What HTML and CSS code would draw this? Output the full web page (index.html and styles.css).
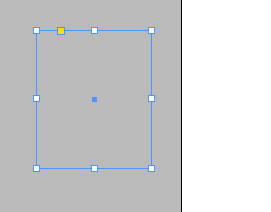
FILE: index.html
```html
<!DOCTYPE html>
<html lang="en">
<head>
    <meta charset="UTF-8">
    <title>Canvas</title>
    <link rel="stylesheet" href="styles.css">
</head>
<body>
    <div class="workspace">
        <div class="canvas">
            <div class="selection">
                <span class="handle h-tl"></span>
                <span class="handle h-tm"></span>
                <span class="handle h-tr"></span>
                <span class="handle h-ml"></span>
                <span class="handle h-mr"></span>
                <span class="handle h-bl"></span>
                <span class="handle h-bm"></span>
                <span class="handle h-br"></span>
                <span class="rotate"></span>
                <span class="pivot"></span>
            </div>
        </div>
        <div class="panel"></div>
    </div>
</body>
</html>
```

FILE: styles.css
```css
* {
    margin: 0;
    padding: 0;
    box-sizing: border-box;
}

body {
    width: 271px;
    height: 212px;
    overflow: hidden;
}

.workspace {
    display: flex;
    height: 212px;
}

.canvas {
    position: relative;
    width: 182px;
    background: #bababa;
    border-right: 1px solid #000000;
}

.panel {
    flex: 1;
    background: #ffffff;
}

.selection {
    position: absolute;
    left: 36px;
    top: 30px;
    width: 116px;
    height: 139px;
    border: 1px solid #4d94ff;
}

.handle {
    position: absolute;
    width: 7px;
    height: 7px;
    background: #ffffff;
    border: 1px solid #4d94ff;
}

.h-tl { left: -4px; top: -4px; }
.h-tm { left: 54px; top: -4px; }
.h-tr { right: -4px; top: -4px; }
.h-ml { left: -4px; top: 64px; }
.h-mr { right: -4px; top: 64px; }
.h-bl { left: -4px; bottom: -4px; }
.h-bm { left: 54px; bottom: -4px; }
.h-br { right: -4px; bottom: -4px; }

.rotate {
    position: absolute;
    left: 20px;
    top: -4px;
    width: 8px;
    height: 8px;
    background: #ffdd00;
    border: 1px solid #4d94ff;
}

.pivot {
    position: absolute;
    left: 55px;
    top: 66px;
    width: 5px;
    height: 5px;
    background: #4d94ff;
}
```
